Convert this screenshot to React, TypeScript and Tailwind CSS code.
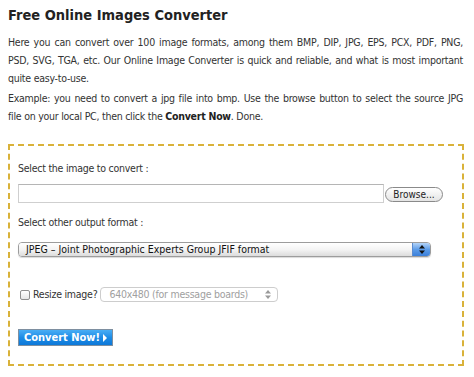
import React from "react";

const FONT = "font-['DejaVu_Sans_Condensed','Liberation_Sans',sans-serif]";

function UpDown({ color = "#111" }: { color?: string }) {
  return (
    <svg width="6" height="9" viewBox="0 0 6 9">
      <path d="M3 0 L6 3.5 H0 Z" fill={color} />
      <path d="M3 9 L6 5.5 H0 Z" fill={color} />
    </svg>
  );
}

export default function App() {
  return (
    <div className={`${FONT} w-[474px] h-[377px] bg-white text-[#333] pl-2 pr-[11px] pt-[6px]`}>
      <h1 className="text-[14.5px] font-bold leading-[18px] text-[#222]">Free Online Images Converter</h1>

      <p className="mt-[9px] text-[10.5px] leading-[18px] tracking-[-0.25px] text-justify">
        Here you can convert over 100 image formats, among them BMP, DIP, JPG, EPS, PCX, PDF, PNG, PSD, SVG,
        TGA, etc. Our Online Image Converter is quick and reliable, and what is most important quite easy-to-use.
      </p>
      <p className="mt-[2px] text-[10.5px] leading-[18px] tracking-[-0.25px]">
        <span className="block text-justify [text-align-last:justify]">
          Example: you need to convert a jpg file into bmp. Use the browse button to select the source JPG
        </span>
        <span className="block">
          file on your local PC, then click the <b className="text-[#222]">Convert Now</b>. Done.
        </span>
      </p>

      <div className="mt-[19px] w-[456px] border-2 border-dashed border-[#d9b23a] pl-2 pr-2 pt-[14px] pb-[18px] text-[10.5px] tracking-[-0.25px]">
        <div className="leading-[16px]">Select the image to convert :</div>
        <div className="mt-2 flex items-center">
          <div className="w-[366px] h-[19px] border border-[#cfcfcf] border-t-[#b5b5b5] bg-white" />
          <button className="ml-[1px] mt-[2px] h-[15px] w-[58px] rounded-full border border-[#8a8a8a] bg-gradient-to-b from-white to-[#e4e4e4] text-[10px] leading-[13px] tracking-normal text-[#222]">
            Browse...
          </button>
        </div>

        <div className="mt-[11px] leading-[16px]">Select other output format :</div>
        <div className="mt-3 flex h-[15px] w-[413px] overflow-hidden rounded-[4px] border border-[#9c9c9c] shadow-[0_1px_1px_rgba(0,0,0,0.15)]">
          <div className="flex flex-1 items-center bg-gradient-to-b from-white via-[#f4f4f4] to-[#dcdcdc] pl-[7px] text-[10.5px] leading-[13px] text-[#111] tracking-[0px]">
            JPEG – Joint Photographic Experts Group JFIF format
          </div>
          <div className="flex w-[18px] items-center justify-center border-l border-[#5a8bd0] bg-gradient-to-b from-[#b3d3f7] via-[#5c9ce8] to-[#3a7fd9]">
            <UpDown />
          </div>
        </div>

        <div className="mt-[30px] flex h-[15px] items-center">
          <div className="ml-[2px] h-[10px] w-[10px] rounded-[2px] border border-[#8f8f8f] bg-gradient-to-b from-white to-[#e6e6e6]" />
          <span className="ml-[3px] leading-[15px]">Resize image?</span>
          <div className="ml-[3px] flex h-[15px] w-[178px] items-center justify-between rounded-[4px] border border-[#cdcdcd] bg-white pl-[8px] pr-[6px]">
            <span className="text-[10.5px] leading-[13px] text-[#a0a0a0]">640x480 (for message boards)</span>
            <UpDown color="#9a9a9a" />
          </div>
        </div>

        <button className="mt-[27px] flex h-[17px] w-[95px] items-center justify-center gap-[3px] border border-[#7e8fa0] bg-gradient-to-b from-[#48aef5] via-[#1d8ce6] to-[#0c78d8] text-[11px] font-bold leading-[15px] tracking-normal text-white">
          Convert Now!
          <svg width="4" height="8" viewBox="0 0 4 8">
            <path d="M0 0 L4 4 L0 8 Z" fill="#fff" />
          </svg>
        </button>
      </div>
    </div>
  );
}
